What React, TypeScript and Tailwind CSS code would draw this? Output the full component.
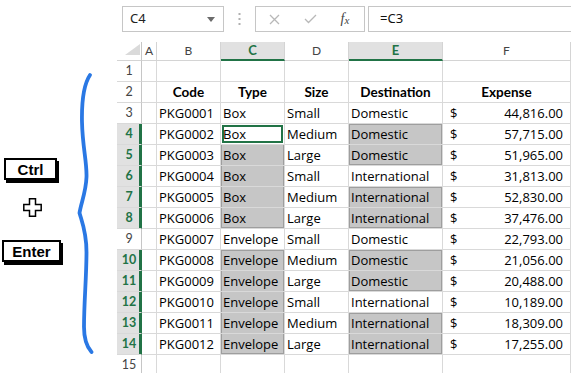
import React from "react";

const SEL_TOP = "bg-[#c6c6c6] shadow-[inset_1px_1px_0_#9e9e9e,inset_-1px_0_0_#9e9e9e]";
const SEL_MID = "bg-[#c6c6c6] shadow-[inset_1px_0_0_#9e9e9e,inset_-1px_0_0_#9e9e9e]";
const SEL_BOT = "bg-[#c6c6c6] shadow-[inset_1px_0_0_#9e9e9e,inset_-1px_-1px_0_#9e9e9e]";
const ACTIVE = "bg-white shadow-[inset_0_0_0_1px_#fff,inset_0_0_0_3px_#217346]";

type Row = {
  n: number;
  code?: string;
  type?: string;
  size?: string;
  dest?: string;
  exp?: string;
  header?: boolean;
  rowSel?: boolean;
  cSel?: string;
  eSel?: string;
};

const rows: Row[] = [
  { n: 1 },
  { n: 2, header: true, code: "Code", type: "Type", size: "Size", dest: "Destination", exp: "Expense" },
  { n: 3, code: "PKG0001", type: "Box", size: "Small", dest: "Domestic", exp: "44,816.00" },
  { n: 4, code: "PKG0002", type: "Box", size: "Medium", dest: "Domestic", exp: "57,715.00", rowSel: true, cSel: ACTIVE, eSel: SEL_TOP },
  { n: 5, code: "PKG0003", type: "Box", size: "Large", dest: "Domestic", exp: "51,965.00", rowSel: true, cSel: SEL_MID, eSel: SEL_BOT },
  { n: 6, code: "PKG0004", type: "Box", size: "Small", dest: "International", exp: "31,813.00", rowSel: true, cSel: SEL_MID },
  { n: 7, code: "PKG0005", type: "Box", size: "Medium", dest: "International", exp: "52,830.00", rowSel: true, cSel: SEL_MID, eSel: SEL_TOP },
  { n: 8, code: "PKG0006", type: "Box", size: "Large", dest: "International", exp: "37,476.00", rowSel: true, cSel: SEL_BOT, eSel: SEL_BOT },
  { n: 9, code: "PKG0007", type: "Envelope", size: "Small", dest: "Domestic", exp: "22,793.00" },
  { n: 10, code: "PKG0008", type: "Envelope", size: "Medium", dest: "Domestic", exp: "21,056.00", rowSel: true, cSel: SEL_TOP, eSel: SEL_TOP },
  { n: 11, code: "PKG0009", type: "Envelope", size: "Large", dest: "Domestic", exp: "20,488.00", rowSel: true, cSel: SEL_MID, eSel: SEL_BOT },
  { n: 12, code: "PKG0010", type: "Envelope", size: "Small", dest: "International", exp: "10,189.00", rowSel: true, cSel: SEL_MID },
  { n: 13, code: "PKG0011", type: "Envelope", size: "Medium", dest: "International", exp: "18,309.00", rowSel: true, cSel: SEL_MID, eSel: SEL_TOP },
  { n: 14, code: "PKG0012", type: "Envelope", size: "Large", dest: "International", exp: "17,255.00", rowSel: true, cSel: SEL_BOT, eSel: SEL_BOT },
  { n: 15 },
];

const cellBase = "h-[21px] border-r border-b border-[#d9d9d9] flex items-end pb-[3px] leading-none whitespace-nowrap overflow-hidden";

function TopBar() {
  return (
    <div className="h-[42px] flex items-start pt-[6px] pl-[122px] shrink-0">
      <div className="w-[102px] h-[26px] border border-[#c6c6c6] flex items-center justify-between pl-[7px] pr-[8px] text-[13px] text-[#222] font-['Noto_Sans',sans-serif]">
        <span>C4</span>
        <svg width="8" height="5" viewBox="0 0 8 5">
          <polygon points="0,0 8,0 4,5" fill="#6b6b6b" />
        </svg>
      </div>
      <div className="w-[31px] h-[26px] flex items-center justify-center">
        <svg width="3" height="12" viewBox="0 0 3 12">
          <rect x="0.5" y="0" width="2" height="2" fill="#b0b0b0" />
          <rect x="0.5" y="5" width="2" height="2" fill="#b0b0b0" />
          <rect x="0.5" y="10" width="2" height="2" fill="#b0b0b0" />
        </svg>
      </div>
      <div className="w-[110px] h-[26px] border border-[#c6c6c6] flex items-center">
        <div className="w-[37px] flex justify-center">
          <svg width="11" height="11" viewBox="0 0 11 11">
            <path d="M1 1 L10 10 M10 1 L1 10" stroke="#b8b8b8" strokeWidth="1.3" fill="none" />
          </svg>
        </div>
        <div className="w-[34px] flex justify-center">
          <svg width="13" height="10" viewBox="0 0 13 10">
            <path d="M1 5 L4.5 8.5 L12 1" stroke="#b8b8b8" strokeWidth="1.3" fill="none" />
          </svg>
        </div>
        <div className="w-[36px] flex justify-center font-['Liberation_Serif',serif] italic text-[#444] leading-none">
          <span className="text-[14px]">f</span>
          <span className="text-[11px] mt-[3px]">x</span>
        </div>
      </div>
      <div className="ml-[3px] flex-1 h-[26px] border border-[#c6c6c6] border-r-0 flex items-center pl-[11px] text-[13px] text-[#111] font-['Noto_Sans',sans-serif]">
        =C3
      </div>
    </div>
  );
}

function Key({ label, w }: { label: string; w: string }) {
  return (
    <div
      className={`${w} h-[22px] border-2 border-black bg-white shadow-[2px_3px_0_#000] flex items-center justify-center font-bold text-[15px] text-black font-['Liberation_Sans',Arial,sans-serif] leading-none`}
    >
      {label}
    </div>
  );
}

function LeftDecor() {
  return (
    <div className="w-[117px] shrink-0 relative">
      <div className="flex flex-col items-start pl-[4px] pt-[116px]">
        <Key label="Ctrl" w="w-[53px]" />
        <div className="ml-[19px] mt-[18px]">
          <svg width="19" height="19" viewBox="0 0 19 19">
            <polygon
              points="6.5,0.8 12.5,0.8 12.5,6.5 18.2,6.5 18.2,12.5 12.5,12.5 12.5,18.2 6.5,18.2 6.5,12.5 0.8,12.5 0.8,6.5 6.5,6.5"
              fill="#fff"
              stroke="#000"
              strokeWidth="1.5"
            />
          </svg>
        </div>
        <div className="-ml-[2px] mt-[23px]">
          <Key label="Enter" w="w-[59px]" />
        </div>
      </div>
      <svg className="absolute left-0 top-0" width="117" height="331" viewBox="0 0 117 331">
        <path
          d="M90,33 C84,42 81.5,55 82,80 C82.5,105 87,120 86.5,135 C86,150 81,161 79.5,171 C82,180 86.5,190 86.5,210 C86.5,235 84,260 84,285 C84,298 87,305 91.5,310"
          stroke="#2a78e4"
          strokeWidth="3.8"
          strokeLinecap="round"
          fill="none"
        />
      </svg>
    </div>
  );
}

function HeaderRow() {
  const hdr = "h-[19px] border-r border-b border-[#d4d4d4] flex items-center justify-center text-[12px] leading-none";
  const normal = "text-[#444]";
  const sel = "bg-[#e1e1e1] border-b-2 border-b-[#217346] text-[#217346] font-bold text-[13px]";
  return (
    <div className="flex font-['Lato',sans-serif]">
      <div className={`w-[25px] ${hdr} border-r-[#c6c6c6] justify-end items-end pr-[1px] pb-[5px]`}>
        <svg width="15" height="11" viewBox="0 0 15 11">
          <polygon points="15,0 15,11 0,11" fill="#dadada" />
        </svg>
      </div>
      <div className={`w-[15px] ${hdr} ${normal}`}>A</div>
      <div className={`w-[64px] ${hdr} ${normal}`}>B</div>
      <div className={`w-[64px] ${hdr} ${sel}`}>C</div>
      <div className={`w-[64px] ${hdr} ${normal}`}>D</div>
      <div className={`w-[94px] ${hdr} ${sel}`}>E</div>
      <div className={`w-[128px] ${hdr} ${normal}`}>F</div>
    </div>
  );
}

function DataRow({ r }: { r: Row }) {
  const rh = r.rowSel
    ? "bg-[#e1e1e1] text-[#217346] font-bold shadow-[inset_-2px_0_0_#217346] border-r-[#217346]"
    : "text-[#444] border-r-[#c6c6c6]";
  const hb = r.header ? "font-bold justify-center pl-0 font-['Lato',sans-serif] text-[13.5px]" : "pl-[2px]";
  return (
    <div className="flex">
      <div className={`w-[25px] h-[21px] border-r border-b border-b-[#d9d9d9] flex items-center justify-center text-[12.5px] leading-none font-['Lato',sans-serif] ${rh}`}>
        {r.n}
      </div>
      <div className={`w-[15px] ${cellBase}`} />
      <div className={`w-[64px] ${cellBase} ${hb}`}>{r.code}</div>
      <div className={`w-[64px] ${cellBase} ${hb} ${r.cSel ?? ""}`}>{r.type}</div>
      <div className={`w-[64px] ${cellBase} ${hb}`}>{r.size}</div>
      <div className={`w-[94px] ${cellBase} ${hb} ${r.eSel ?? ""}`}>{r.dest}</div>
      <div className={`w-[128px] ${cellBase} ${r.header ? "font-bold justify-center font-['Lato',sans-serif] text-[13.5px]" : "justify-between pl-[7px] pr-[7px]"}`}>
        {r.header ? (
          r.exp
        ) : r.exp ? (
          <>
            <span>$</span>
            <span>{r.exp}</span>
          </>
        ) : null}
      </div>
    </div>
  );
}

export default function App() {
  return (
    <div className="w-[571px] h-[373px] bg-white overflow-hidden flex flex-col font-['Open_Sans',sans-serif] text-[13px] text-black">
      <TopBar />
      <div className="flex flex-1">
        <LeftDecor />
        <div className="flex flex-col">
          <HeaderRow />
          {rows.map((r) => (
            <DataRow key={r.n} r={r} />
          ))}
        </div>
      </div>
    </div>
  );
}
